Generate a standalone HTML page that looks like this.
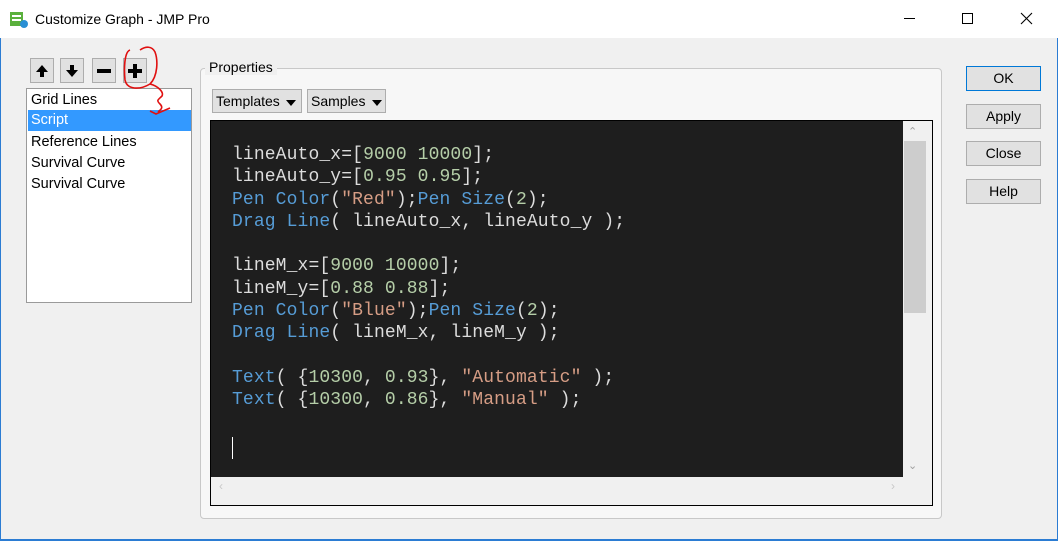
<!DOCTYPE html>
<html><head><style>
*{margin:0;padding:0;box-sizing:border-box}
body{width:1058px;height:541px;background:#f0f0f0;font-family:"Liberation Sans",sans-serif;font-size:14px;color:#000;position:relative;overflow:hidden}
.abs{position:absolute}
.title{left:0;top:0;width:1058px;height:38px;background:#fff}
.btn{position:absolute;background:#e1e1e1;border:1px solid #adadad;text-align:center}
.sq{width:24px;height:25px;top:58px}
.rb{left:966px;width:75px;height:25px;line-height:23px;font-size:14px}
.code{font-family:"Liberation Mono",monospace;font-size:18px;letter-spacing:0.12px;color:#dcdcdc;white-space:pre;line-height:22.3px}
.n{color:#b5cea8}.k{color:#569cd6}.s{color:#d69d85}
.li{position:absolute;left:4px;height:21px;line-height:21px;font-size:14.5px}
</style></head><body>
<div class="abs title"></div>
<svg class="abs" style="left:9px;top:10px" width="20" height="20"><rect x="1" y="2" width="13" height="14" fill="#5ab03c"/><rect x="3" y="5" width="9" height="2" fill="#fff"/><rect x="3" y="9" width="9" height="2" fill="#fff"/><circle cx="15" cy="14" r="4" fill="#2a8fd4"/></svg>
<div class="abs" style="left:35px;top:11px;font-size:14px">Customize Graph - JMP Pro</div>
<div class="abs" style="left:904px;top:18px;width:11px;height:1px;background:#000"></div>
<div class="abs" style="left:962px;top:13px;width:11px;height:11px;border:1px solid #000"></div>
<svg class="abs" style="left:1020px;top:12px" width="13" height="13"><path d="M1 1L12 12M12 1L1 12" stroke="#000" stroke-width="1.1"/></svg>
<div class="abs" style="left:0;top:38px;width:1px;height:503px;background:#2b7cd3"></div>
<div class="abs" style="left:1057px;top:38px;width:1px;height:503px;background:#2b7cd3"></div>
<div class="abs" style="left:0;top:539px;width:1058px;height:2px;background:#2b7cd3"></div>

<div class="btn sq" style="left:30px"><svg width="22" height="23"><path d="M11 6L5 13H9V18H13V13H17Z" fill="#000"/></svg></div>
<div class="btn sq" style="left:60px"><svg width="22" height="23"><path d="M11 18L5 11H9V6H13V11H17Z" fill="#000"/></svg></div>
<div class="btn sq" style="left:92px"><svg width="22" height="23"><rect x="4" y="10" width="14" height="4" fill="#000"/></svg></div>
<div class="btn sq" style="left:123px"><svg width="22" height="23"><rect x="4" y="10" width="14" height="4" fill="#000"/><rect x="9" y="5" width="4" height="14" fill="#000"/></svg></div>

<div class="abs" style="left:26px;top:88px;width:166px;height:215px;background:#fff;border:1px solid #9a9a9a">
<div class="li" style="top:1px">Grid Lines</div>
<div class="li" style="top:21px;left:1px;width:163px;padding-left:3px;background:#3399ff;color:#fff">Script</div>
<div class="li" style="top:43px">Reference Lines</div>
<div class="li" style="top:64px">Survival Curve</div>
<div class="li" style="top:85px">Survival Curve</div>
</div>

<svg class="abs" style="left:0;top:0" width="200" height="130"><path d="M130 50C124 52 124 70 125 80C127 90 140 90 150 84C158 76 158 60 155 52C152 46 146 46 140 50M150 84C158 86 164 92 162 96C158 100 156 100 160 104C164 108 160 110 158 112M150 111L156 114L170 108" fill="none" stroke="#e01010" stroke-width="1.6"/></svg>

<div class="abs" style="left:200px;top:68px;width:742px;height:451px;border:1px solid #c8c8c8;border-radius:4px;background:#f7f7f7"></div>
<div class="abs" style="left:205px;top:59px;padding:0 4px;background:#f0f0f0">Properties</div>

<div class="btn" style="left:212px;top:89px;width:90px;height:24px;line-height:22px;text-align:left;padding-left:3px">Templates <svg width="10" height="6" style="margin-left:2px"><path d="M0 0H10L5 6Z"/></svg></div>
<div class="btn" style="left:307px;top:89px;width:79px;height:24px;line-height:22px;text-align:left;padding-left:3px">Samples <svg width="10" height="6" style="margin-left:3px"><path d="M0 0H10L5 6Z"/></svg></div>

<div class="abs" style="left:210px;top:120px;width:723px;height:386px;border:1px solid #000;background:#f0f0f0">
<div class="abs" style="left:0;top:0;width:692px;height:356px;background:#1e1e1e"></div>
<div class="abs" style="left:692px;top:0;width:28px;height:356px;background:#f0f0f0"></div>
<div class="abs" style="left:693px;top:20px;width:22px;height:172px;background:#cdcdcd"></div>
<div class="abs" style="left:697px;top:4px;color:#a0a0a0;font-size:11px">&#8963;</div>
<div class="abs" style="left:697px;top:338px;color:#a0a0a0;font-size:11px">&#8964;</div>
<div class="abs" style="left:8px;top:358px;color:#c8c8c8;font-size:12px">&lsaquo;</div>
<div class="abs" style="left:680px;top:358px;color:#c8c8c8;font-size:12px">&rsaquo;</div>
<div class="abs code" style="left:21px;top:23px">lineAuto_x=[<span class="n">9000 10000</span>];
lineAuto_y=[<span class="n">0.95 0.95</span>];
<span class="k">Pen Color</span>(<span class="s">"Red"</span>);<span class="k">Pen Size</span>(<span class="n">2</span>);
<span class="k">Drag Line</span>( lineAuto_x, lineAuto_y );

lineM_x=[<span class="n">9000 10000</span>];
lineM_y=[<span class="n">0.88 0.88</span>];
<span class="k">Pen Color</span>(<span class="s">"Blue"</span>);<span class="k">Pen Size</span>(<span class="n">2</span>);
<span class="k">Drag Line</span>( lineM_x, lineM_y );

<span class="k">Text</span>( {<span class="n">10300</span>, <span class="n">0.93</span>}, <span class="s">"Automatic"</span> );
<span class="k">Text</span>( {<span class="n">10300</span>, <span class="n">0.86</span>}, <span class="s">"Manual"</span> );</div>
<div class="abs" style="left:21px;top:316px;width:1px;height:22px;background:#fff"></div>
</div>

<div class="btn rb" style="top:66px;border-color:#0078d7">OK</div>
<div class="btn rb" style="top:104px">Apply</div>
<div class="btn rb" style="top:141px">Close</div>
<div class="btn rb" style="top:179px">Help</div>
</body></html>
